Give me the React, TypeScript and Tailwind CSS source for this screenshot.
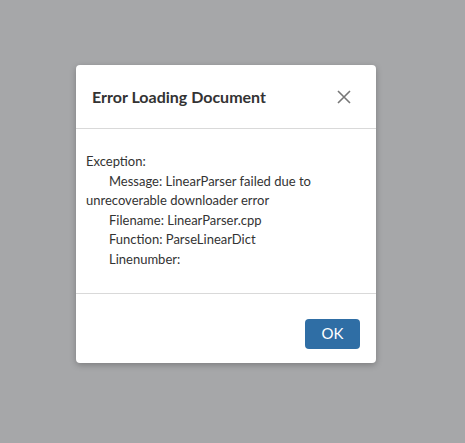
export default function App() {
  const lines = [
    { indent: false, text: "Exception:" },
    { indent: true, text: "Message: LinearParser failed due to unrecoverable downloader error" },
    { indent: true, text: "Filename: LinearParser.cpp" },
    { indent: true, text: "Function: ParseLinearDict" },
    { indent: true, text: "Linenumber:" },
  ]

  return (
    <div className="h-[443px] w-[465px] bg-[#a6a7a9] pl-[76px] pt-[65px] font-['Lato','Liberation_Sans',sans-serif]">
      {/* Dialog */}
      <div className="w-[300px] rounded-[4px] bg-white shadow-[0_2px_6px_rgba(0,0,0,0.25)]">
        <div className="flex h-[64px] items-center justify-between border-b border-[#d9d9d9] pl-[16px] pr-[24px]">
          <h2 className="text-[16px] font-bold text-[#333]">Error Loading Document</h2>
          <button className="text-[#777]">
            <svg width="16" height="16" viewBox="0 0 16 16" stroke="currentColor" strokeWidth="1.6" fill="none">
              <path d="M2 2 L14 14 M14 2 L2 14" />
            </svg>
          </button>
        </div>

        <div className="border-b border-[#d9d9d9] px-[10px] pb-[23px] pt-[23px] text-[13px] leading-[19.6px] text-[#333]">
          {lines.map((l, i) => (
            <p key={i} className={l.indent ? "indent-[23px]" : ""}>
              {l.text}
            </p>
          ))}
        </div>

        <div className="flex justify-end pb-[14px] pr-[16px] pt-[25px]">
          <button className="h-[30px] w-[55px] rounded-[4px] bg-[#2f6ea5] text-[15px] text-white">OK</button>
        </div>
      </div>
    </div>
  )
}
